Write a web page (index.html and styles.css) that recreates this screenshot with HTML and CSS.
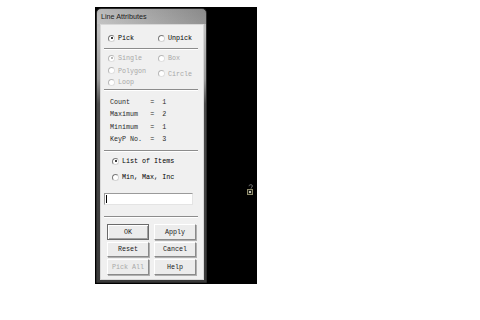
FILE: index.html
```html
<!DOCTYPE html>
<html>
<head>
<meta charset="utf-8">
<link rel="stylesheet" href="styles.css">
</head>
<body>
<div class="stage">
  <div class="dialog">
    <div class="titlebar">Line Attributes</div>
    <div class="client">
      <div class="sec sec-pick">
        <div class="row2 row-pick">
          <div class="radio on strong"><span class="dot"></span>Pick</div>
          <div class="radio strong"><span class="dot"></span>Unpick</div>
        </div>
      </div>
      <div class="sep"></div>
      <div class="sec sec-mode">
        <div class="row2 row-mode">
          <div class="radio on off"><span class="dot"></span>Single</div>
          <div class="radio off"><span class="dot"></span>Box</div>
        </div>
        <div class="row2 row-mode">
          <div class="radio off"><span class="dot"></span>Polygon</div>
          <div class="radio off low"><span class="dot"></span>Circle</div>
        </div>
        <div class="row2 row-mode">
          <div class="radio off"><span class="dot"></span>Loop</div>
        </div>
      </div>
      <div class="sep"></div>
      <div class="sec sec-values">
        <div class="val">Count     =  1</div>
        <div class="val">Maximum   =  2</div>
        <div class="val">Minimum   =  1</div>
        <div class="val">KeyP No.  =  3</div>
      </div>
      <div class="sep"></div>
      <div class="sec sec-list">
        <div class="radio on strong list-row"><span class="dot"></span>List of Items</div>
        <div class="radio strong list-row"><span class="dot"></span>Min, Max, Inc</div>
        <div class="input"><span class="caret"></span></div>
      </div>
      <div class="sep"></div>
      <div class="sec sec-buttons">
        <div class="btn default">OK</div>
        <div class="btn">Apply</div>
        <div class="btn">Reset</div>
        <div class="btn">Cancel</div>
        <div class="btn disabled">Pick All</div>
        <div class="btn">Help</div>
      </div>
    </div>
  </div>
  <svg class="pick-icon" width="8" height="12" viewBox="0 0 8 12">
    <path d="M3 3.2 C3 1.4 6.4 1.2 6.4 3 C6.4 4.2 5 4.4 5 5.6" fill="none" stroke="#7c7c7c" stroke-width="1"/>
    <rect x="1.5" y="6.5" width="5" height="5" fill="#202018" stroke="#8e8a6a" stroke-width="1"/>
    <rect x="3" y="8" width="2" height="2" fill="#c8c8b8"/>
  </svg>
</div>
</body>
</html>
```
FILE: styles.css
```css
html, body {
  margin: 0;
  padding: 0;
  background: #ffffff;
}

body {
  width: 480px;
  height: 320px;
  overflow: hidden;
  font-family: "Liberation Mono", "DejaVu Sans Mono", monospace;
}

.stage {
  position: relative;
  margin: 7px 0 0 95px;
  width: 162px;
  height: 277px;
  background: #000000;
  padding: 1px 0 0 1px;
  box-sizing: border-box;
}

.dialog {
  width: 111px;
  height: 275px;
  box-sizing: border-box;
  border: 1px solid #2a2a2a;
  border-radius: 5px 5px 0 0;
  background: linear-gradient(to bottom, #b0b0b0 0px, #c0c0c0 20px, #9a9a9a 70px, #4a4a4a 95px, #3a3a3a 100%);
  display: flex;
  flex-direction: column;
}

.titlebar {
  height: 15px;
  line-height: 15px;
  padding-left: 4px;
  font-family: "Liberation Sans", "DejaVu Sans", sans-serif;
  font-size: 7.2px;
  color: #1a1a1a;
  background: linear-gradient(to right, rgba(255,255,255,0.12), rgba(0,0,0,0.22));
  border-radius: 4px 4px 0 0;
}

.client {
  margin: 0 2px 0 3px;
  height: 256px;
  box-sizing: border-box;
  border: 1px solid #d8d8d8;
  background: #f0f0f0;
  padding: 0 5px 0 3px;
  font-size: 6.7px;
  color: #2a2a2a;
}

.sep {
  height: 0;
  border-top: 1px solid #8c8c8c;
  border-bottom: 1px solid #ffffff;
}

.sec-pick {
  height: 23px;
  box-sizing: border-box;
  padding-top: 8px;
}

.row2 {
  display: grid;
  grid-template-columns: 50px 1fr;
  padding-left: 4px;
}

.row-pick {
  height: 10px;
}

.row-mode {
  height: 12px;
}

.sec-mode {
  height: 39px;
  box-sizing: border-box;
  padding-top: 2px;
}

.radio {
  display: flex;
  align-items: center;
  white-space: pre;
  line-height: 10px;
  height: 100%;
}

.radio.strong {
  color: #000000;
}

.radio.off {
  color: #a8a8a8;
}

.radio.low {
  padding-top: 3px;
}

.dot {
  width: 5px;
  height: 5px;
  border-radius: 50%;
  border: 1px solid #7a7a7a;
  border-right-color: #d4d4d4;
  border-bottom-color: #d4d4d4;
  background: #ffffff;
  margin-right: 3px;
  flex: none;
  position: relative;
}

.radio.on .dot::after {
  content: "";
  position: absolute;
  left: 1.5px;
  top: 1.5px;
  width: 2px;
  height: 2px;
  border-radius: 50%;
  background: #000000;
}

.radio.off .dot {
  border-color: #b8b8b8;
  border-right-color: #e0e0e0;
  border-bottom-color: #e0e0e0;
}

.radio.off.on .dot::after {
  background: #a0a0a0;
}

.sec-values {
  height: 59px;
  box-sizing: border-box;
  padding: 5px 0 0 6px;
}

.val {
  white-space: pre;
  line-height: 12.4px;
  height: 12.4px;
}

.sec-list {
  height: 64px;
  box-sizing: border-box;
  padding-top: 1px;
}

.list-row {
  height: 16px;
  padding-left: 8px;
}

.input {
  margin-top: 8px;
  width: 89px;
  height: 12px;
  box-sizing: border-box;
  background: #ffffff;
  border: 1px solid #9a9a9a;
  border-right-color: #e4e4e4;
  border-bottom-color: #e4e4e4;
  display: flex;
  align-items: center;
  padding-left: 1px;
}

.caret {
  width: 1px;
  height: 8px;
  background: #000000;
}

.sec-buttons {
  display: grid;
  grid-template-columns: 42px 42px;
  grid-auto-rows: 15.5px;
  column-gap: 5px;
  row-gap: 2px;
  padding: 6px 0 0 3px;
}

.btn {
  box-sizing: border-box;
  background: #ececec;
  border: 1px solid;
  border-color: #ffffff #8a8a8a #8a8a8a #ffffff;
  box-shadow: 1px 1px 0 #b0b0b0;
  display: flex;
  align-items: center;
  justify-content: center;
  font-size: 6.7px;
  color: #1a1a1a;
  white-space: pre;
}

.btn.default {
  border-color: #6a6a6a;
  box-shadow: inset 1px 1px 0 #ffffff, inset -1px -1px 0 #a0a0a0;
}

.btn.disabled {
  color: #a8a8a8;
}

.pick-icon {
  position: absolute;
  left: 151px;
  top: 176px;
}
```
